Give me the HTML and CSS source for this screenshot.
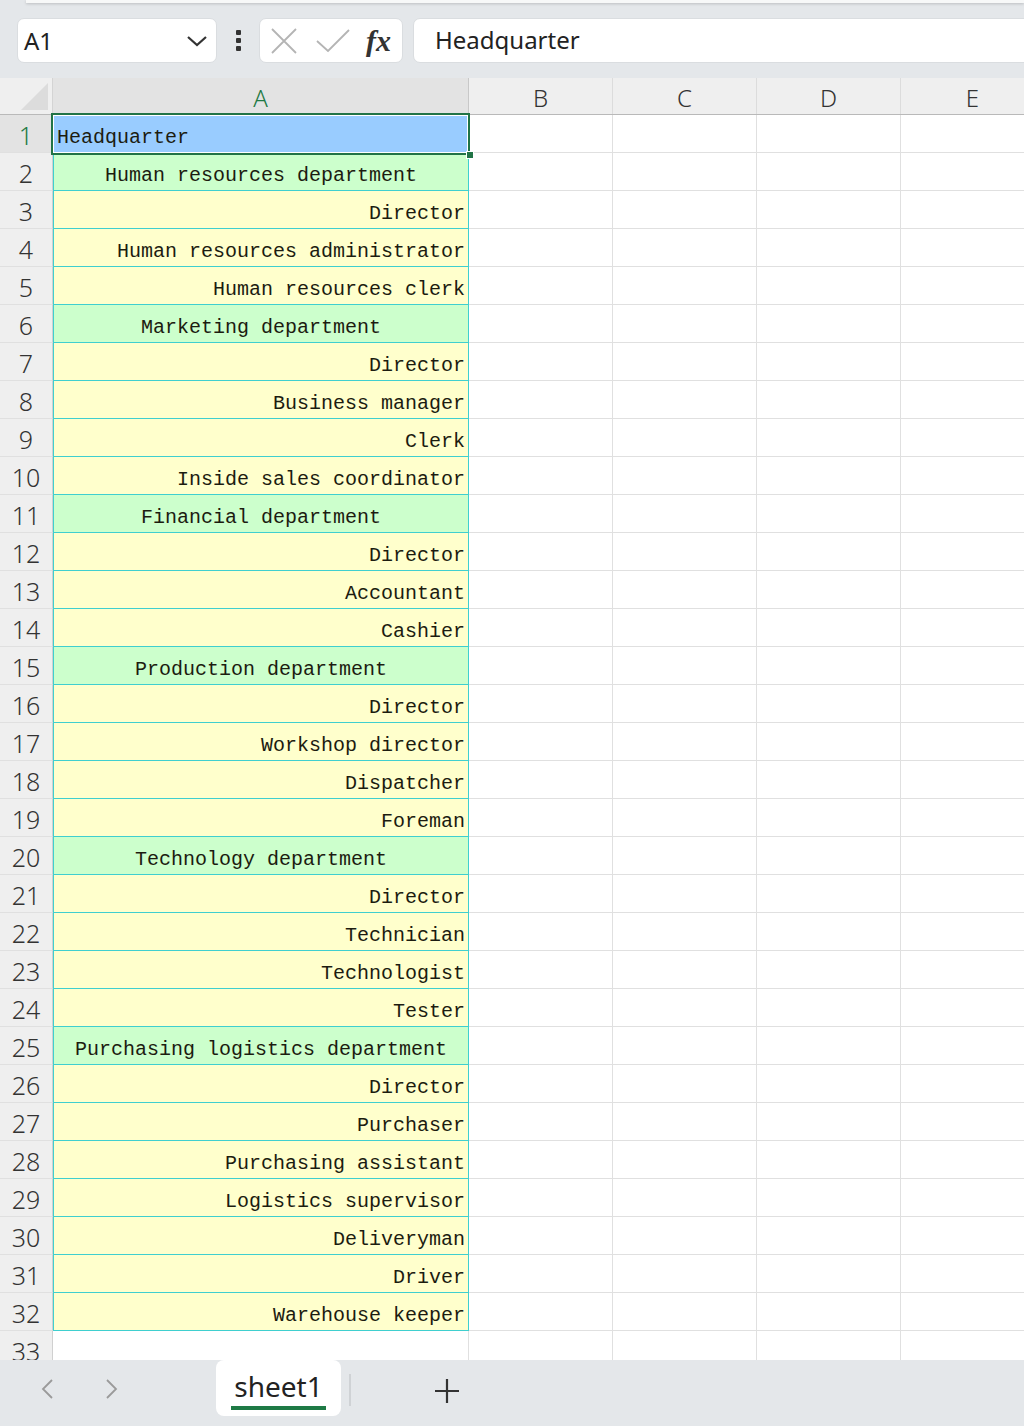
FILE: index.html
```html
<!DOCTYPE html>
<html lang="en">
<head>
<meta charset="utf-8">
<title>sheet1</title>
<link rel="stylesheet" href="styles.css">
</head>
<body>
<div class="app">
  <div class="toolbar">
    <div class="topstrip"></div>
    <div class="bar">
      <div class="namebox">
        <span class="nb-text">A1</span>
        <svg class="chev" width="22" height="14" viewBox="0 0 22 14"><path d="M2 3 L11 11 L20 3" fill="none" stroke="#333" stroke-width="2.2"/></svg>
      </div>
      <div class="dots"><span></span><span></span><span></span></div>
      <div class="fxbox">
        <svg width="28" height="26" viewBox="0 0 28 26"><path d="M2 1 L26 25 M26 1 L2 25" stroke="#b4b4b4" stroke-width="1.8" fill="none"/></svg>
        <svg width="34" height="24" viewBox="0 0 34 24"><path d="M1 12 L12 22 L33 1" stroke="#b4b4b4" stroke-width="1.8" fill="none"/></svg>
        <span class="fx">fx</span>
      </div>
      <div class="formula">Headquarter</div>
    </div>
  </div>

  <div class="grid">
    <div class="row header">
      <div class="corner"><span class="tri"></span></div>
      <div class="ch sel">A</div>
      <div class="ch">B</div>
      <div class="ch">C</div>
      <div class="ch">D</div>
      <div class="ch">E</div>
    </div>

    <div class="row"><div class="rh sel">1</div><div class="ca blue left">Headquarter</div><div class="c"></div><div class="c"></div><div class="c"></div><div class="c"></div></div>
    <div class="row"><div class="rh">2</div><div class="ca green center">Human resources department</div><div class="c"></div><div class="c"></div><div class="c"></div><div class="c"></div></div>
    <div class="row"><div class="rh">3</div><div class="ca yellow right">Director</div><div class="c"></div><div class="c"></div><div class="c"></div><div class="c"></div></div>
    <div class="row"><div class="rh">4</div><div class="ca yellow right">Human resources administrator</div><div class="c"></div><div class="c"></div><div class="c"></div><div class="c"></div></div>
    <div class="row"><div class="rh">5</div><div class="ca yellow right">Human resources clerk</div><div class="c"></div><div class="c"></div><div class="c"></div><div class="c"></div></div>
    <div class="row"><div class="rh">6</div><div class="ca green center">Marketing department</div><div class="c"></div><div class="c"></div><div class="c"></div><div class="c"></div></div>
    <div class="row"><div class="rh">7</div><div class="ca yellow right">Director</div><div class="c"></div><div class="c"></div><div class="c"></div><div class="c"></div></div>
    <div class="row"><div class="rh">8</div><div class="ca yellow right">Business manager</div><div class="c"></div><div class="c"></div><div class="c"></div><div class="c"></div></div>
    <div class="row"><div class="rh">9</div><div class="ca yellow right">Clerk</div><div class="c"></div><div class="c"></div><div class="c"></div><div class="c"></div></div>
    <div class="row"><div class="rh">10</div><div class="ca yellow right">Inside sales coordinator</div><div class="c"></div><div class="c"></div><div class="c"></div><div class="c"></div></div>
    <div class="row"><div class="rh">11</div><div class="ca green center">Financial department</div><div class="c"></div><div class="c"></div><div class="c"></div><div class="c"></div></div>
    <div class="row"><div class="rh">12</div><div class="ca yellow right">Director</div><div class="c"></div><div class="c"></div><div class="c"></div><div class="c"></div></div>
    <div class="row"><div class="rh">13</div><div class="ca yellow right">Accountant</div><div class="c"></div><div class="c"></div><div class="c"></div><div class="c"></div></div>
    <div class="row"><div class="rh">14</div><div class="ca yellow right">Cashier</div><div class="c"></div><div class="c"></div><div class="c"></div><div class="c"></div></div>
    <div class="row"><div class="rh">15</div><div class="ca green center">Production department</div><div class="c"></div><div class="c"></div><div class="c"></div><div class="c"></div></div>
    <div class="row"><div class="rh">16</div><div class="ca yellow right">Director</div><div class="c"></div><div class="c"></div><div class="c"></div><div class="c"></div></div>
    <div class="row"><div class="rh">17</div><div class="ca yellow right">Workshop director</div><div class="c"></div><div class="c"></div><div class="c"></div><div class="c"></div></div>
    <div class="row"><div class="rh">18</div><div class="ca yellow right">Dispatcher</div><div class="c"></div><div class="c"></div><div class="c"></div><div class="c"></div></div>
    <div class="row"><div class="rh">19</div><div class="ca yellow right">Foreman</div><div class="c"></div><div class="c"></div><div class="c"></div><div class="c"></div></div>
    <div class="row"><div class="rh">20</div><div class="ca green center">Technology department</div><div class="c"></div><div class="c"></div><div class="c"></div><div class="c"></div></div>
    <div class="row"><div class="rh">21</div><div class="ca yellow right">Director</div><div class="c"></div><div class="c"></div><div class="c"></div><div class="c"></div></div>
    <div class="row"><div class="rh">22</div><div class="ca yellow right">Technician</div><div class="c"></div><div class="c"></div><div class="c"></div><div class="c"></div></div>
    <div class="row"><div class="rh">23</div><div class="ca yellow right">Technologist</div><div class="c"></div><div class="c"></div><div class="c"></div><div class="c"></div></div>
    <div class="row"><div class="rh">24</div><div class="ca yellow right">Tester</div><div class="c"></div><div class="c"></div><div class="c"></div><div class="c"></div></div>
    <div class="row"><div class="rh">25</div><div class="ca green center">Purchasing logistics department</div><div class="c"></div><div class="c"></div><div class="c"></div><div class="c"></div></div>
    <div class="row"><div class="rh">26</div><div class="ca yellow right">Director</div><div class="c"></div><div class="c"></div><div class="c"></div><div class="c"></div></div>
    <div class="row"><div class="rh">27</div><div class="ca yellow right">Purchaser</div><div class="c"></div><div class="c"></div><div class="c"></div><div class="c"></div></div>
    <div class="row"><div class="rh">28</div><div class="ca yellow right">Purchasing assistant</div><div class="c"></div><div class="c"></div><div class="c"></div><div class="c"></div></div>
    <div class="row"><div class="rh">29</div><div class="ca yellow right">Logistics supervisor</div><div class="c"></div><div class="c"></div><div class="c"></div><div class="c"></div></div>
    <div class="row"><div class="rh">30</div><div class="ca yellow right">Deliveryman</div><div class="c"></div><div class="c"></div><div class="c"></div><div class="c"></div></div>
    <div class="row"><div class="rh">31</div><div class="ca yellow right">Driver</div><div class="c"></div><div class="c"></div><div class="c"></div><div class="c"></div></div>
    <div class="row"><div class="rh">32</div><div class="ca yellow right">Warehouse keeper</div><div class="c"></div><div class="c"></div><div class="c"></div><div class="c"></div></div>
    <div class="row"><div class="rh">33</div><div class="ca empty"></div><div class="c"></div><div class="c"></div><div class="c"></div><div class="c"></div></div>

    <div class="selection"><span class="handle"></span></div>
  </div>

  <div class="tabs">
    <div class="nav">
      <svg width="14" height="22" viewBox="0 0 14 22"><path d="M12 2 L3 11 L12 20" fill="none" stroke="#9a9a9a" stroke-width="1.8"/></svg>
      <svg width="14" height="22" viewBox="0 0 14 22"><path d="M2 2 L11 11 L2 20" fill="none" stroke="#9a9a9a" stroke-width="1.8"/></svg>
    </div>
    <div class="tab"><span class="tab-label">sheet1</span></div>
    <div class="sep"></div>
    <div class="add">
      <svg width="24" height="24" viewBox="0 0 24 24"><path d="M12 0 V24 M0 12 H24" stroke="#333" stroke-width="2.2"/></svg>
    </div>
  </div>
</div>
</body>
</html>
```

FILE: styles.css
```css
* { box-sizing: border-box; }
html, body {
  margin: 0;
  padding: 0;
  width: 1024px;
  height: 1426px;
  overflow: hidden;
  background: #ffffff;
}
.app {
  display: flex;
  flex-direction: column;
  height: 1426px;
  font-family: "Noto Sans", "Liberation Sans", sans-serif;
  color: #222;
}

/* toolbar */
.toolbar {
  height: 78px;
  background: #e4e7ea;
  display: flex;
  flex-direction: column;
}
.topstrip {
  height: 3px;
  margin-left: 26px;
  background: #f7f8f8;
  box-shadow: 0 1px 3px rgba(0,0,0,0.18);
}
.bar {
  display: flex;
  align-items: flex-start;
  padding: 15px 0 0 17px;
  height: 75px;
}
.namebox {
  width: 200px;
  height: 45px;
  background: #fff;
  border-radius: 7px;
  border: 1px solid #dadde0;
  display: flex;
  align-items: center;
  justify-content: space-between;
  padding: 0 8px 0 6px;
}
.nb-text { font-size: 24px; line-height: 1; color: #222; }
.chev { display: block; }
.dots {
  width: 42px;
  height: 45px;
  display: flex;
  flex-direction: column;
  align-items: center;
  justify-content: center;
  gap: 3px;
}
.dots span {
  width: 5px;
  height: 5px;
  background: #333;
  border-radius: 1px;
}
.fxbox {
  width: 144px;
  height: 45px;
  background: #fff;
  border-radius: 7px;
  border: 1px solid #dadde0;
  display: flex;
  align-items: center;
  gap: 18px;
  padding-left: 10px;
}
.fxbox svg { display: block; }
.fx {
  font-family: "Liberation Serif", "DejaVu Serif", serif;
  font-style: italic;
  font-weight: bold;
  font-size: 30px;
  line-height: 1;
  color: #333;
  margin-left: -2px;
}
.formula {
  flex: 1;
  margin-left: 10px;
  margin-right: -12px;
  height: 45px;
  background: #fff;
  border-radius: 7px;
  border: 1px solid #dadde0;
  font-size: 24px;
  line-height: 41px;
  padding-left: 21px;
  color: #222;
}

/* grid */
.grid {
  position: relative;
  flex: 1;
  overflow: hidden;
  background: #fff;
}
.row {
  display: flex;
  height: 38px;
}
.row.header {
  height: 37px;
  background: #efefef;
  border-bottom: 1px solid #b9b9b9;
}
.corner {
  position: relative;
  width: 53px;
  height: 36px;
  border-right: 1px solid #d4d4d4;
  flex: none;
}
.tri {
  position: absolute;
  right: 4px;
  bottom: 4px;
  width: 0;
  height: 0;
  border-left: 27px solid transparent;
  border-bottom: 27px solid #dcdcdc;
}
.ch {
  flex: none;
  width: 144px;
  height: 36px;
  border-right: 1px solid #dcdcdc;
  text-align: center;
  font-size: 24px;
  line-height: 40px;
  color: #333;
  font-weight: 300;
}
.ch.sel {
  width: 416px;
  background: #e3e3e3;
  color: #1e7a45;
  border-right: 1px solid #c8c8c8;
}
.rh {
  flex: none;
  width: 53px;
  height: 38px;
  background: #efefef;
  border-right: 1px solid #d0d0d0;
  border-bottom: 1px solid #e0e0e0;
  text-align: center;
  font-size: 25px;
  line-height: 41px;
  color: #333;
  font-weight: 300;
}
.rh.sel {
  background: #e3e3e3;
  color: #1e7a45;
}
.ca {
  flex: none;
  width: 416px;
  height: 38px;
  border-left: 1px solid #3fcfcf;
  border-right: 1px solid #3fcfcf;
  border-bottom: 1px solid #3fcfcf;
  font-family: "Liberation Mono", "DejaVu Sans Mono", monospace;
  font-size: 20px;
  padding-top: 4px;
  line-height: 38px;
  color: #1c1c10;
  white-space: pre;
  overflow: hidden;
}
.ca.blue { background: #99ccff; }
.ca.green { background: #ccffcc; }
.ca.yellow { background: #ffffcc; }
.ca.empty { border-color: #e0e0e0; border-left-color: transparent; }
.left { text-align: left; padding-left: 3px; }
.center { text-align: center; }
.right { text-align: right; padding-right: 3px; }
.c {
  flex: none;
  width: 144px;
  height: 38px;
  border-right: 1px solid #e0e0e0;
  border-bottom: 1px solid #e0e0e0;
}
.selection {
  position: absolute;
  left: 51px;
  top: 35px;
  width: 419px;
  height: 42px;
  border: 2px solid #217346;
  box-shadow: inset 0 0 0 1px #ffffff;
  pointer-events: none;
}
.handle {
  position: absolute;
  right: -6px;
  bottom: -6px;
  width: 8px;
  height: 8px;
  background: #217346;
  border: 1px solid #ffffff;
}

/* tabs */
.tabs {
  height: 66px;
  flex: none;
  background: #e4e7ea;
  display: flex;
  align-items: flex-start;
}
.nav {
  width: 216px;
  height: 58px;
  display: flex;
  align-items: center;
  gap: 51px;
  padding-left: 40px;
}
.nav svg { display: block; }
.tab {
  width: 125px;
  height: 56px;
  background: #fff;
  border-radius: 8px;
  display: flex;
  justify-content: center;
}
.tab-label {
  font-size: 28px;
  line-height: 52px;
  height: 50px;
  color: #222;
  border-bottom: 4px solid #1e7a45;
  padding: 0 3px;
  margin-top: 0;
}
.sep {
  width: 2px;
  height: 32px;
  background: #cfd2d5;
  margin: 14px 0 0 8px;
}
.add {
  margin: 19px 0 0 84px;
}
.add svg { display: block; }
```
